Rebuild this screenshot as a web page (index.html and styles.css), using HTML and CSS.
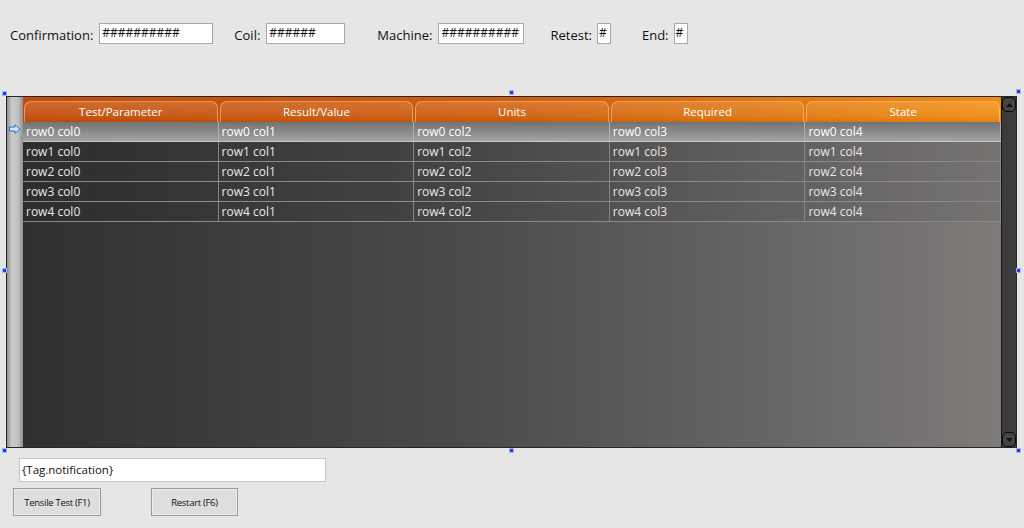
FILE: index.html
```html
<!DOCTYPE html>
<html>
<head>
<meta charset="utf-8">
<link rel="stylesheet" href="styles.css">
</head>
<body>
<div class="top">
  <span class="lbl l-conf">Confirmation:</span><span class="box b-conf">##########</span>
  <span class="lbl l-coil">Coil:</span><span class="box b-coil">######</span>
  <span class="lbl l-mach">Machine:</span><span class="box b-mach">##########</span>
  <span class="lbl l-ret">Retest:</span><span class="box b-small">#</span>
  <span class="lbl l-end">End:</span><span class="box b-small">#</span>
</div>

<div class="gridwrap">
  <span class="handle h-tl"></span><span class="handle h-tm"></span><span class="handle h-tr"></span>
  <span class="handle h-ml"></span><span class="handle h-mr"></span>
  <span class="handle h-bl"></span><span class="handle h-bm"></span><span class="handle h-br"></span>
  <div class="grid">
    <div class="rowhead">
      <div class="rh-top"></div>
      <div class="rh-cell">
        <svg width="12" height="10" viewBox="0 0 12 10"><path d="M0.5 3 H6 V0.8 L11 5 L6 9.2 V7 H0.5 Z" fill="#cfe6ff" stroke="#2a6fd0" stroke-width="1"/></svg>
      </div>
    </div>
    <div class="main">
      <div class="hdr">
        <div class="th"><span>Test/Parameter</span></div>
        <div class="th"><span>Result/Value</span></div>
        <div class="th"><span>Units</span></div>
        <div class="th"><span>Required</span></div>
        <div class="th"><span>State</span></div>
      </div>
      <div class="tr sel"><div class="td">row0 col0</div><div class="td">row0 col1</div><div class="td">row0 col2</div><div class="td">row0 col3</div><div class="td">row0 col4</div></div>
      <div class="tr"><div class="td">row1 col0</div><div class="td">row1 col1</div><div class="td">row1 col2</div><div class="td">row1 col3</div><div class="td">row1 col4</div></div>
      <div class="tr"><div class="td">row2 col0</div><div class="td">row2 col1</div><div class="td">row2 col2</div><div class="td">row2 col3</div><div class="td">row2 col4</div></div>
      <div class="tr"><div class="td">row3 col0</div><div class="td">row3 col1</div><div class="td">row3 col2</div><div class="td">row3 col3</div><div class="td">row3 col4</div></div>
      <div class="tr"><div class="td">row4 col0</div><div class="td">row4 col1</div><div class="td">row4 col2</div><div class="td">row4 col3</div><div class="td">row4 col4</div></div>
    </div>
    <div class="sbar">
      <div class="sbtn"><svg width="7" height="4" viewBox="0 0 7 4"><path d="M0 4 L3.5 0 L7 4 Z" fill="#111"/></svg></div>
      <div class="strack"></div>
      <div class="sbtn"><svg width="7" height="4" viewBox="0 0 7 4"><path d="M0 0 L3.5 4 L7 0 Z" fill="#111"/></svg></div>
    </div>
  </div>
</div>

<div class="notif">{Tag.notification}</div>
<div class="buttons">
  <button class="btn b1">Tensile Test (F1)</button>
  <button class="btn b2">Restart (F6)</button>
</div>
</body>
</html>
```
FILE: styles.css
```css
html, body { margin: 0; padding: 0; }
body {
  width: 1024px; height: 528px; overflow: hidden;
  background: #e6e6e6;
  font-family: "Open Sans", "Noto Sans", sans-serif;
  font-size: 13px;
  color: #111;
}
.top {
  display: flex; align-items: center;
  padding: 23px 0 0 10px;
  height: 21px;
}
.lbl { line-height: 20px; margin-top: 3px; }
.box {
  box-sizing: border-box; height: 21px;
  background: #fff; border: 1px solid #a9a9a9;
  line-height: 18px; padding-left: 2px;
  font-size: 12px;
  overflow: hidden; white-space: nowrap;
}
.l-conf { margin-right: 6px; }
.b-conf { width: 114px; }
.l-coil { margin-left: 21px; margin-right: 6px; }
.b-coil { width: 79px; }
.l-mach { margin-left: 32px; margin-right: 6px; }
.b-mach { width: 86px; }
.l-ret { margin-left: 26px; margin-right: 5px; }
.b-small { width: 14px; padding-left: 1px; }
.l-end { margin-left: 31px; margin-right: 5px; }

.gridwrap { position: relative; margin: 52px 0 0 6px; width: 1011px; height: 352px; }
.grid {
  box-sizing: border-box; width: 1011px; height: 352px;
  border: 1px solid #262626;
  display: flex;
  background: linear-gradient(to right, #2f2f2f 0%, #4a4a4a 45%, #7f7c7a 100%);
}
.rowhead {
  width: 16px; flex: none;
  background: linear-gradient(to right, #8c8c8c 0%, #cbcbcb 30%, #c0c0c0 70%, #8e8e8e 100%);
}
.rh-top { height: 25px; }
.rh-cell { height: 20px; display: flex; align-items: center; justify-content: center; padding-bottom: 7px; box-sizing: border-box; }
.main { width: 978px; flex: none; }
.hdr {
  height: 25px; display: grid; grid-template-columns: repeat(5, 1fr);
  background: linear-gradient(to right, #c24d0a 0%, #cf5e0c 50%, #f08c10 100%);
}
.th { padding: 4px 1px 0 1px; }
.th span {
  display: block; box-sizing: border-box; height: 21px;
  border: 1px solid rgba(255, 205, 160, 0.55); border-bottom: none;
  border-radius: 7px 7px 0 0;
  background: linear-gradient(to bottom, rgba(255,255,255,0.16) 0%, rgba(255,255,255,0.06) 70%, rgba(0,0,0,0.05) 100%);
  color: #fff; text-align: center; font-size: 11.5px; line-height: 15px; padding-top: 2px;
}
.tr {
  display: grid; grid-template-columns: repeat(5, 1fr);
  height: 20px; box-sizing: border-box;
  border-bottom: 1px solid #8a8a8a;
  background: rgba(0,0,0,0.06);
}
.tr.sel {
  background: linear-gradient(to bottom, #727272 0%, #8c8c8c 55%, #a4a4a4 100%);
  border-bottom: 1px solid #c8c8c8;
}
.td {
  color: #e8e8e8; padding-left: 3px; line-height: 19px; font-size: 12px;
  border-right: 1px solid #858585; white-space: nowrap;
}
.sel .td { color: #fff; border-right-color: #b0b0b0; }
.sbar {
  width: 15px; flex: none; background: #3b3b3b;
  display: flex; flex-direction: column;
  border-left: 1px solid #1a1a1a;
  box-sizing: border-box;
}
.sbtn {
  height: 15px; box-sizing: border-box; margin: 0;
  border: 1.5px solid #050505; border-radius: 5px;
  background: #444;
  display: flex; align-items: center; justify-content: center;
}
.strack { flex: 1; }

.handle {
  position: absolute; width: 3px; height: 3px;
  background: #1b3bff; border: 1px solid #a8b4e6;
}
.h-tl { left: -4px; top: -5px; }
.h-tm { left: 503px; top: -6px; }
.h-tr { left: 1010px; top: -7px; }
.h-ml { left: -4px; top: 172px; }
.h-mr { left: 1010px; top: 172px; }
.h-bl { left: -4px; top: 352px; }
.h-bm { left: 503px; top: 352px; }
.h-br { left: 1010px; top: 352px; }

.notif {
  box-sizing: border-box; margin: 10px 0 0 19px;
  width: 307px; height: 24px;
  background: #fff; border: 1px solid #c4c4c4;
  padding-left: 2px; line-height: 21px; font-size: 11.5px;
}
.buttons { display: flex; margin: 6px 0 0 13px; }
.btn {
  box-sizing: border-box; height: 28px;
  background: #dedede; border: 1px solid #9a9a9a;
  box-shadow: inset 0 0 0 1px #ececec;
  font-family: "Open Sans", "Noto Sans", sans-serif;
  font-size: 9.5px; letter-spacing: -0.3px; color: #111; padding: 0;
}
.b1 { width: 88px; }
.b2 { width: 87px; margin-left: 50px; }
```
